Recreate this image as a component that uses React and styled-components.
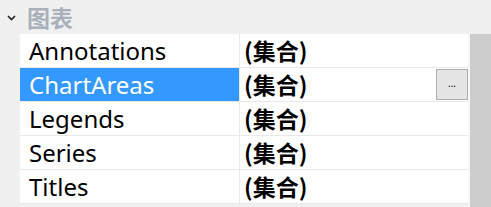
import React from "react";
import styled, { createGlobalStyle } from "styled-components";

const GlobalStyle = createGlobalStyle`
  html, body {
    margin: 0;
    padding: 0;
    background: #f0f0f0;
  }
  body {
    font-family: "Noto Sans", "Noto Sans CJK SC", sans-serif;
  }
`;

const rows = [
  { name: "Annotations", value: "(集合)" },
  { name: "ChartAreas", value: "(集合)", selected: true },
  { name: "Legends", value: "(集合)" },
  { name: "Series", value: "(集合)" },
  { name: "Titles", value: "(集合)" },
];

const App = () => {
  return (
    <>
      <GlobalStyle />
      <Grid>
        <CategoryRow>
          <Toggle>
            <svg width="9" height="6" viewBox="0 0 9 6">
              <path d="M1 1 L4.5 4.5 L8 1" fill="none" stroke="#222" strokeWidth="1.6" />
            </svg>
          </Toggle>
          <CategoryLabel>图表</CategoryLabel>
        </CategoryRow>
        <Body>
          <Gutter />
          <Table>
            {rows.map((row) => (
              <Row key={row.name}>
                <NameCell $selected={row.selected}>{row.name}</NameCell>
                <ValueCell>
                  <Value>{row.value}</Value>
                  {row.selected && <EllipsisButton>...</EllipsisButton>}
                </ValueCell>
              </Row>
            ))}
          </Table>
          <Separator />
          <Scrollbar />
        </Body>
      </Grid>
    </>
  );
};

const Grid = styled.div`
  display: flex;
  flex-direction: column;
  width: 491px;
  height: 207px;
  overflow: hidden;
  background: #f0f0f0;
`;

const CategoryRow = styled.div`
  display: flex;
  align-items: center;
  height: 34px;
  flex-shrink: 0;
`;

const Toggle = styled.div`
  width: 27px;
  display: flex;
  justify-content: center;
  padding-right: 4px;
  box-sizing: border-box;
  margin-top: 1px;
`;

const CategoryLabel = styled.span`
  font-family: "Noto Sans CJK SC", sans-serif;
  font-weight: 700;
  font-size: 23px;
  color: #a9b0bb;
  line-height: 34px;
`;

const Body = styled.div`
  display: flex;
  flex: 1;
`;

const Gutter = styled.div`
  width: 20px;
  flex-shrink: 0;
`;

const Table = styled.div`
  width: 448px;
  flex-shrink: 0;
  background: #ffffff;
  align-self: flex-start;
`;

const Row = styled.div`
  display: flex;
  height: 34px;
  border-bottom: 1px solid #e9e9e9;
  box-sizing: border-box;
`;

const NameCell = styled.div`
  width: 220px;
  flex-shrink: 0;
  box-sizing: border-box;
  padding-left: 9px;
  border-right: 1px solid #e9e9e9;
  font-size: 24px;
  line-height: 33px;
  color: ${(p) => (p.$selected ? "#ffffff" : "#000000")};
  background: ${(p) => (p.$selected ? "#3399ff" : "transparent")};
`;

const ValueCell = styled.div`
  flex: 1;
  display: flex;
  align-items: center;
  justify-content: space-between;
  padding-left: 4px;
`;

const Value = styled.span`
  font-family: "Noto Sans CJK SC", sans-serif;
  font-weight: 700;
  font-size: 23px;
  line-height: 33px;
  color: #000;
`;

const EllipsisButton = styled.button`
  width: 32px;
  height: 31px;
  box-sizing: border-box;
  margin: 0;
  padding: 0 0 4px;
  border: 1px solid #adadad;
  background: #e5e5e5;
  font-family: "Noto Sans", sans-serif;
  font-size: 10px;
  color: #000;
  line-height: 1;
`;

const Separator = styled.div`
  width: 2px;
  background: #f7f7f7;
`;

const Scrollbar = styled.div`
  flex: 1;
  background: #cdcdcd;
`;

export default App;
